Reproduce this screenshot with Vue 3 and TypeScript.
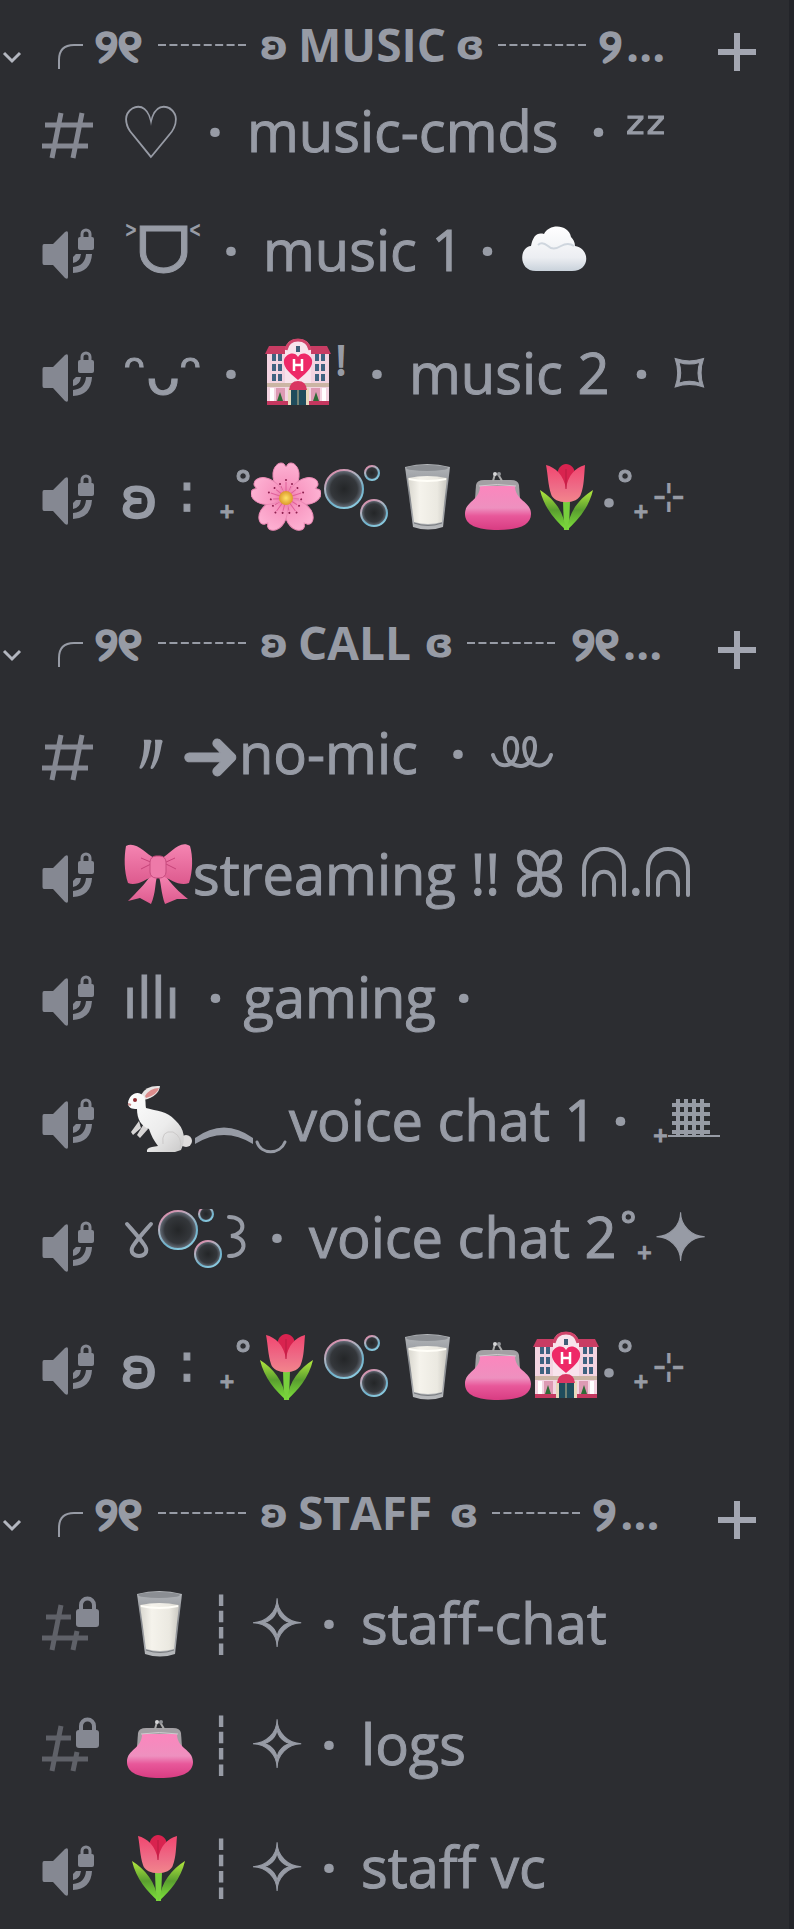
<script setup lang="ts">
import { ref } from 'vue'

type Gap = 0 | 4 | 8 | 12 | 16 | 20 | 24 | 28 | 32
interface Piece {
  text?: string
  art?: string
  width?: number
  gap?: Gap
  look?: string
}
interface Channel {
  icon: 'hash' | 'hash-locked' | 'voice-locked'
  pieces: Piece[]
  look?: string
}
interface Category {
  id: string
  title: Piece[]
  channels: Channel[]
}

const word = (text: string, gap: Gap = 0): Piece => ({ text, gap })
const glyph = (text: string, look: string, gap: Gap = 0): Piece => ({ text, look, gap })
const art = (name: string, width: number, gap: Gap = 0, look = ''): Piece => ({ art: name, width, gap, look })
const emoji = (name: string, gap: Gap = 0, look = ''): Piece => art(name, 70, gap, look)
const dot = (gap: Gap): Piece => glyph('·', 'c16 dot', gap)

const title = (name: string, nameGap: Gap, tail: string, tailLook: string, endGap: Gap): Piece[] => [
  art('corner', 32, 0),
  glyph('୨୧', 'c56 curl', 4),
  art('dashes', 88, 12),
  glyph('ʚ', 'c32 wing', 12),
  word(name, 8),
  glyph('ɞ', 'c32 wing', nameGap),
  art('dashes', 88, 12),
  glyph(tail, tailLook, 12),
  word('…', endGap),
]

const charms = (first: string, last: string): Piece[] => [
  glyph('ʚ', 'c32 thick'),
  glyph('∶', 'c16', 24),
  glyph('₊', 'c16 plus', 24),
  glyph('˚', 'c16'),
  emoji(first),
  emoji('bubbles'),
  emoji('milk'),
  emoji('purse'),
  emoji(last),
  glyph('.', 'c16 dot raised'),
  glyph('˚', 'c16'),
  glyph('₊', 'c16 plus'),
  glyph('⊹', 'c40 cross'),
]

const staff = (charm: string, name: string): Piece[] => [
  emoji(charm),
  glyph('┊', 'c16 plain', 20),
  glyph('✧', 'c48 large', 24),
  dot(20),
  word(name, 24),
]

const categories: Category[] = [
  {
    id: 'music',
    title: title('MUSIC', 8, '୨', 'c24 curl', 4),
    channels: [
      { icon: 'hash', pieces: [glyph('♡', 'c56 huge plain'), dot(28), word('music-cmds', 24), dot(32), glyph('ᶻᶻ', 'c32', 24)] },
      { icon: 'voice-locked', pieces: [glyph('˃', 'c16 brow'), glyph('ᗜ', 'c48 large'), glyph('˂', 'c16 brow'), dot(20), word('music 1', 24), dot(16), emoji('cloud', 24)] },
      { icon: 'voice-locked', pieces: [glyph('ᵔ', 'c24'), glyph('ᴗ', 'c32'), glyph('ᵔ', 'c24'), dot(20), emoji('hospital', 24), glyph('!', 'c16 super'), dot(20), word('music 2', 24), dot(24), glyph('⌑', 'c32', 24)] },
      { icon: 'voice-locked', pieces: charms('blossom', 'tulip') },
    ],
  },
  {
    id: 'call',
    title: title('CALL', 12, '୨୧', 'c56 curl', 0),
    channels: [
      { icon: 'hash', pieces: [glyph('〃', 'c56 thick'), glyph('➜', 'c56 huge', 4), word('no-mic'), dot(32), art('loops', 64, 24)] },
      { icon: 'voice-locked', pieces: [emoji('bow'), word('streaming !!'), glyph('ꕤ', 'c48 large', 16), art('arch', 48, 16), glyph('.', 'c16'), art('arch', 48)] },
      { icon: 'voice-locked', pieces: [word('ıllı'), dot(28), word('gaming', 20), dot(20)] },
      { icon: 'voice-locked', pieces: [emoji('rabbit'), art('waves', 96), word('voice chat 1'), dot(16), glyph('₊', 'c16 plus', 24), art('fence', 56)] },
      { icon: 'voice-locked', look: 'lifted', pieces: [art('ribbon', 32), emoji('bubbles', 0, 'cropped'), art('brace', 24), dot(20), word('voice chat 2', 24), glyph('˚', 'c16', 4), glyph('₊', 'c16 plus'), glyph('✦', 'c56 large')] },
      { icon: 'voice-locked', pieces: charms('tulip', 'hospital') },
    ],
  },
  {
    id: 'staff',
    title: title('STAFF', 16, '୨', 'c24 curl', 4),
    channels: [
      { icon: 'hash-locked', pieces: staff('milk', 'staff-chat') },
      { icon: 'hash-locked', pieces: staff('purse', 'logs') },
      { icon: 'voice-locked', pieces: staff('tulip', 'staff vc') },
    ],
  },
]

const closed = ref<string[]>([])
const toggle = (id: string) => {
  closed.value = closed.value.includes(id) ? closed.value.filter((c) => c !== id) : [...closed.value, id]
}
const petals = [0, 72, 144, 216, 288]
const windows = [22, 32, 42].flatMap((y) => [9, 15, 52, 58].map((x) => ({ x, y })))
</script>

<template>
  <svg class="defs" aria-hidden="true">
    <defs>
      <linearGradient id="g-cloud" x1="0" y1="0" x2="0" y2="1"><stop offset="0" stop-color="#ffffff" /><stop offset=".7" stop-color="#eceef2" /><stop offset="1" stop-color="#c9d2db" /></linearGradient>
      <linearGradient id="g-purse" x1="0" y1="0" x2="0" y2="1"><stop offset="0" stop-color="#fb86bd" /><stop offset=".5" stop-color="#ee90bf" /><stop offset=".68" stop-color="#e8589a" /><stop offset="1" stop-color="#d83c82" /></linearGradient>
      <linearGradient id="g-milk" x1="0" y1="0" x2="1" y2="0"><stop offset="0" stop-color="#d9d7cf" /><stop offset=".3" stop-color="#f5f3ec" /><stop offset=".75" stop-color="#ebe9e1" /><stop offset="1" stop-color="#cbc9c2" /></linearGradient>
      <linearGradient id="g-glass" x1="0" y1="0" x2="0" y2="1"><stop offset="0" stop-color="#b4b7bb" /><stop offset=".5" stop-color="#84878c" /><stop offset="1" stop-color="#b9bbbe" /></linearGradient>
      <linearGradient id="g-tulip" x1="0" y1="0" x2="0" y2="1"><stop offset="0" stop-color="#f2466f" /><stop offset=".6" stop-color="#ee6c87" /><stop offset="1" stop-color="#f2868c" /></linearGradient>
      <linearGradient id="g-leaf" x1="0" y1="0" x2="0" y2="1"><stop offset="0" stop-color="#b3e83f" /><stop offset=".5" stop-color="#5a9e2f" /><stop offset="1" stop-color="#7ee23c" /></linearGradient>
      <linearGradient id="g-bow" x1="0" y1="0" x2="0" y2="1"><stop offset="0" stop-color="#f585b2" /><stop offset="1" stop-color="#dd5a8e" /></linearGradient>
      <linearGradient id="g-fur" x1="0" y1="0" x2="1" y2="1"><stop offset="0" stop-color="#ffffff" /><stop offset=".6" stop-color="#ececec" /><stop offset="1" stop-color="#c9c8c8" /></linearGradient>
      <linearGradient id="g-rim" x1=".2" y1="0" x2=".7" y2="1"><stop offset="0" stop-color="#e08bab" /><stop offset=".35" stop-color="#aab3c0" /><stop offset=".7" stop-color="#6fb2cc" /><stop offset="1" stop-color="#8ccbe0" /></linearGradient>
      <radialGradient id="g-bubble"><stop offset="0" stop-color="#242628" /><stop offset=".7" stop-color="#34373b" /><stop offset="1" stop-color="#6b7480" /></radialGradient>
      <radialGradient id="g-petal" gradientUnits="userSpaceOnUse" cx="0" cy="0" r="34"><stop offset="0" stop-color="#e76d9d" /><stop offset=".35" stop-color="#f795bf" /><stop offset="1" stop-color="#fdb0d2" /></radialGradient>
      <radialGradient id="g-pollen"><stop offset="0" stop-color="#ffe36a" /><stop offset="1" stop-color="#dd9a2c" /></radialGradient>
    </defs>

    <symbol id="hash" viewBox="0 0 60 80">
      <path class="line5" d="M22 23L13 68M43 23L34 68M6 35H54M3 56H49" />
    </symbol>
    <symbol id="hash-locked" viewBox="0 0 60 80">
      <path class="line5 dim" d="M22 23L13 68M38 49L34 68M7 35H32M3 56H49" />
      <rect class="solid" x="37" y="27" width="23" height="18" rx="3" />
      <path class="line4" d="M42 28V23a6.500 6.500 0 0 1 13 0V28" />
    </symbol>
    <symbol id="voice-locked" viewBox="0 0 60 80">
      <path class="solid" d="M5 35H14L26 23Q29 21 29 24V68Q29 71 26 69L14 56H5Q3.500 56 3.500 54V37Q3.500 35 5 35Z" />
      <rect class="solid" x="39" y="28" width="16" height="13" rx="2" />
      <path class="line3" d="M43 29V25a4 4 0 0 1 8 0V29" />
      <path class="solid" d="M34 54V48Q36 46 37 45H42Q41 53 34 54ZM34 64V58Q46 57 47 45H53Q52 63 34 64Z" />
    </symbol>

    <symbol id="corner" viewBox="0 0 32 80"><path class="thin" d="M5 65V56Q5 41 20 41H29" /></symbol>
    <symbol id="dashes" viewBox="0 0 88 80"><path class="thin" d="M0 41H88" stroke-dasharray="8 3.430" /></symbol>
    <symbol id="loops" viewBox="0 0 64 80">
      <path class="stroke" d="M3 43C6 53 14 55 20 52C29 47 30 26 21 26C12 26 13 48 23 52C30 56 37 54 41 48C47 38 46 26 40 26C31 26 33 48 43 52C52 56 59 51 61 43" />
    </symbol>
    <symbol id="arch" viewBox="0 0 48 80">
      <path class="stroke" d="M4 62V37C4 9 44 9 44 37V62M14 62V50C14 35 34 35 34 50V62" />
    </symbol>
    <symbol id="waves" viewBox="0 0 96 80">
      <path class="fill" d="M2 59Q31 38 60 59V65Q31 47 2 65Z" />
      <path class="stroke slim" d="M64 63C68 76 87 76 92 63" />
    </symbol>
    <symbol id="fence" viewBox="0 0 56 80">
      <path class="stroke butt" d="M10 20V57M18 20V57M26 20V57M34 20V57M4 26H42M4 35H42M4 44H42M4 53H42" />
      <path class="thin" d="M0 57H52" />
    </symbol>
    <symbol id="ribbon" viewBox="0 0 32 80">
      <path class="stroke" d="M4 28C12 37 16 41 22 50C26 57 20 60 16 60C12 60 6 57 10 50C16 41 20 37 28 28" />
    </symbol>
    <symbol id="brace" viewBox="0 0 24 80">
      <path class="stroke" d="M4 21C21 21 22 38 6 40C24 41 22 60 4 60" />
    </symbol>

    <symbol id="cloud" viewBox="0 0 70 80">
      <path d="M17 62C-1 62 0 38 12 37C14 27 18 23 25 25C30 14 50 15 52 28C54 30 56 33 56 37C71 39 72 62 53 62Z" fill="url(#g-cloud)" />
      <path d="M19 36Q23 32 29 37Q34 42 42 37Q49 33 55 37" fill="none" stroke="#cfd6de" stroke-width="2" />
    </symbol>
    <symbol id="hospital" viewBox="0 0 70 80">
      <path d="M4 20H66V72H4Z" fill="#f3d4e1" />
      <path d="M2 22L6 14H64L68 22Z" fill="#c83c63" />
      <path d="M22 52V18Q24 7 35 7T48 18V52Z" fill="#f8e3ec" />
      <path d="M23 18Q25 8 35 8T47 18" fill="none" stroke="#d0446a" stroke-width="3" />
      <path d="M33 14H37V20H33Z" fill="#3f5d77" />
      <path v-for="w in windows" :key="w.x + '-' + w.y" :d="`M${w.x} ${w.y}h4v7h-4z`" fill="#3f6280" />
      <path d="M35 48C24 39 20 34 21 28C23 21 32 19 35 25C38 19 47 21 49 28C50 34 46 39 35 48Z" fill="#ee2867" />
      <path d="M31 27V39M39 27V39M31 33H39" stroke="#fff" stroke-width="2.500" />
      <path d="M4 51H66V55H4Z" fill="#cbb5a4" />
      <path d="M4 69H66V73H4Z" fill="#c4375f" />
      <path d="M7 56H11V69H7ZM59 56H63V69H59Z" fill="#fff" />
      <path d="M13 56H22V69H13ZM48 56H57V69H48Z" fill="#dd9ab3" />
      <path d="M14 69L17 60L20 69ZM50 69L53 60L56 69Z" fill="#2f6b37" />
      <path d="M25 56H46V73H25Z" fill="#e7d9bc" />
      <path d="M28 57H43V73H28Z" fill="#1f4c5c" />
      <path d="M35 57V73" stroke="#c9b98d" stroke-width="1" />
      <path d="M26 58Q27 49 35 49T44 58Z" fill="#d93562" />
    </symbol>
    <symbol id="blossom" viewBox="0 0 70 80">
      <g transform="translate(35 43)">
        <g v-for="p in petals" :key="p" :transform="`rotate(${p})`">
          <path d="M0 0C-6 -5 -14 -14 -13 -25C-12 -33 -6 -37 -2 -34L0 -31L2 -34C6 -37 12 -33 13 -25C14 -14 6 -5 0 0Z" fill="url(#g-petal)" stroke="#ec8ab5" stroke-width="1" />
          <path d="M0 -4V-16M-2 -4L-5 -12M2 -4L5 -12" stroke="#e0609a" stroke-width="1" />
          <circle cx="0" cy="-18" r="1" fill="#8d1f4e" /><circle cx="-6" cy="-14" r="1" fill="#8d1f4e" /><circle cx="6" cy="-14" r="1" fill="#8d1f4e" />
        </g>
        <circle r="7" fill="url(#g-pollen)" />
      </g>
    </symbol>
    <symbol id="bubbles" viewBox="0 0 70 80">
      <g fill="url(#g-bubble)" stroke="url(#g-rim)" stroke-width="2">
        <circle cx="23" cy="34" r="19" /><circle cx="51" cy="18" r="7" /><circle cx="53" cy="58" r="13" />
      </g>
    </symbol>
    <symbol id="milk" viewBox="0 0 70 80">
      <path d="M14 12Q36 6 59 12L52 72Q37 77 22 72Z" fill="url(#g-glass)" />
      <ellipse cx="36" cy="13" rx="21" ry="3" fill="#8b8e93" />
      <path d="M17 23Q36 19 56 23L51 67Q37 71 23 67Z" fill="url(#g-milk)" />
      <path d="M18 24Q36 28 55 24" fill="none" stroke="#fffef8" stroke-width="2" />
      <path d="M23 68Q37 73 51 68" fill="none" stroke="#777a7e" stroke-width="1" />
    </symbol>
    <symbol id="purse" viewBox="0 0 70 80">
      <path d="M14 44L15 30Q16 25 23 25H50Q57 25 58 30L59 44Z" fill="#a3a0a4" />
      <path d="M32 26L34 19M41 26L37 19" stroke="#aaa" stroke-width="2" />
      <circle cx="34" cy="19" r="2" fill="#d5d5d7" /><circle cx="38" cy="19" r="2" fill="#909296" />
      <path d="M19 31H54C54 46 70 46 70 59C70 70 58 75 37 75S4 70 4 59C4 46 19 46 19 31Z" fill="url(#g-purse)" />
      <path d="M18 31Q36 28 55 31" fill="none" stroke="#cfcbd0" stroke-width="1" />
    </symbol>
    <symbol id="tulip" viewBox="0 0 70 80">
      <path d="M32 46H39L38 75H33Z" fill="#78cf3d" />
      <path d="M9 35C22 43 33 56 35 75C25 66 13 53 9 35ZM62 35C49 43 38 56 36 75C46 66 58 53 62 35Z" fill="url(#g-leaf)" />
      <path d="M35 9C45 10 46 20 42 36H28C24 20 26 10 35 9Z" fill="#d9234f" />
      <path d="M15 10C24 12 33 20 35 34C37 20 44 13 54 10C53 22 53 31 50 39C47 50 23 50 20 39C17 30 17 20 15 10Z" fill="url(#g-tulip)" />
      <path d="M35 34L35 14" stroke="#b91c43" stroke-width="1" />
    </symbol>
    <symbol id="bow" viewBox="0 0 70 80">
      <path d="M28 42C23 50 13 60 5 68L17 65L28 71C33 60 32 49 34 44ZM42 42C47 50 57 60 65 66L54 66L42 71C38 60 38 49 36 44Z" fill="url(#g-bow)" />
      <path d="M3 13C13 8 23 21 31 25V43C23 46 13 54 5 50C1 38 1 24 3 13ZM67 13C57 6 47 21 39 25V43C47 46 57 54 66 50C70 38 70 23 67 13Z" fill="url(#g-bow)" />
      <path d="M18 36L30 30M53 36L41 30M18 25L30 30M52 25L41 30" stroke="#c64379" stroke-width="1" />
      <rect x="27" y="23" width="16" height="22" rx="6" fill="#ee7aa9" stroke="#c64c7f" stroke-width="1" />
    </symbol>
    <symbol id="rabbit" viewBox="0 0 70 80">
      <path d="M18 16Q23 6 37 7Q36 17 21 21Z" fill="#e7e4e4" />
      <path d="M22 17Q27 9 36 9Q34 16 23 19Z" fill="#dc8c8c" />
      <circle cx="63" cy="62" r="6" fill="#dedcdc" />
      <path d="M16 42L8 53L10 56L18 49ZM22 43L14 56L17 59L25 50Z" fill="#d7d5d5" />
      <path d="M5 24C6 17 12 12 18 15C24 18 22 24 23 29C34 32 44 32 52 41C62 50 63 61 58 71L52 73H24Q23 69 29 68L35 67C31 62 28 56 26 50C18 47 14 40 14 30C9 30 5 29 5 24Z" fill="url(#g-fur)" />
      <path d="M57 70Q60 58 50 53Q38 51 40 65" fill="none" stroke="#cbc9c9" stroke-width="1" />
      <circle cx="12" cy="21" r="2" fill="#8f2c31" />
      <path d="M5 25L8 26" stroke="#c98b8b" stroke-width="2" />
    </symbol>
  </svg>

  <nav class="channels">
    <section v-for="(category, index) in categories" :key="category.id" class="category" :class="{ snug: index === 0 }">
      <header class="heading">
        <h2>
          <button type="button" class="toggle" :aria-expanded="!closed.includes(category.id)" @click="toggle(category.id)">
            <svg class="chevron" viewBox="0 0 22 80" aria-hidden="true"><path class="line2" d="M4 49L12 57L20 49" /></svg>
            <template v-for="(piece, i) in category.title" :key="i">
              <svg v-if="piece.art" class="art" :class="`g${piece.gap}`" :width="piece.width" height="80" aria-hidden="true"><use :href="'#' + piece.art" /></svg>
              <span v-else class="piece" :class="[`g${piece.gap}`, piece.look]"><span class="ink">{{ piece.text }}</span></span>
            </template>
          </button>
        </h2>
        <button type="button" class="add" aria-label="Create channel">
          <svg width="40" height="80" viewBox="0 0 40 80" aria-hidden="true"><path class="line6" d="M1 48H39M20 29V67" /></svg>
        </button>
      </header>
      <ul v-if="!closed.includes(category.id)">
        <li v-for="(channel, c) in category.channels" :key="c">
          <a href="#" class="channel">
            <svg class="icon" width="60" height="80" aria-hidden="true"><use :href="'#' + channel.icon" /></svg>
            <span class="label" :class="channel.look">
              <template v-for="(piece, i) in channel.pieces" :key="i">
                <svg v-if="piece.art" class="art" :class="[`g${piece.gap}`, piece.look]" :width="piece.width" height="80" aria-hidden="true"><use :href="'#' + piece.art" /></svg>
                <span v-else class="piece" :class="[`g${piece.gap}`, piece.look]"><span class="ink">{{ piece.text }}</span></span>
              </template>
            </span>
          </a>
        </li>
      </ul>
    </section>
  </nav>
</template>

<style>
body {
  margin: 0;
  background: #2c2d31;
}
</style>

<style scoped>
.defs {
  position: absolute;
  width: 0;
  height: 0;
}
.channels {
  box-sizing: border-box;
  min-height: 100vh;
  display: flex;
  flex-direction: column;
  gap: 64px;
  overflow: hidden;
  border-right: 5px solid #232429;
  background: #2c2d31;
  color: #979ba5;
  font-family: "Open Sans", "DejaVu Sans", "Noto Sans", sans-serif;
}
.heading {
  height: 88px;
  display: flex;
  align-items: center;
  padding-right: 32px;
}
h2 {
  flex: 1;
  min-width: 0;
  margin: 0;
  overflow: hidden;
}
button {
  border: 0;
  padding: 0;
  background: none;
  color: inherit;
  font: inherit;
  cursor: pointer;
}
.toggle {
  display: flex;
  align-items: center;
  font-size: 46px;
  font-weight: 700;
}
.chevron {
  width: 22px;
  height: 80px;
  flex: none;
  margin-right: 32px;
}
.add {
  flex: none;
  display: flex;
}
ul {
  list-style: none;
  margin: 0;
  padding: 26px 0 0;
  display: grid;
  gap: 43px;
}
li:first-child {
  margin-bottom: -2px;
}
.category + .category {
  margin-top: -1px;
}
.snug ul {
  padding-top: 2px;
}
.snug li:first-child {
  margin-bottom: -4px;
}
.channel {
  display: flex;
  align-items: center;
  gap: 24px;
  padding-left: 39px;
  color: inherit;
  text-decoration: none;
  font-size: 56px;
  -webkit-text-stroke: 1px currentColor;
}
.icon,
.art {
  flex: none;
  display: block;
}
.label {
  display: flex;
  align-items: center;
}
.lifted {
  margin: -12px 0 0;
}
.cropped {
  clip-path: inset(13px 0 0 0);
}
.piece {
  flex: none;
  height: 80px;
  line-height: 80px;
  display: flex;
  justify-content: center;
  white-space: pre;
}
.ink {
  flex: none;
}
.c16 { width: 16px; }
.c24 { width: 24px; }
.c32 { width: 32px; }
.c40 { width: 40px; }
.c48 { width: 48px; }
.c56 { width: 56px; }
.g4 { margin-left: 4px; }
.g8 { margin-left: 8px; }
.g12 { margin-left: 12px; }
.g16 { margin-left: 16px; }
.g20 { margin-left: 20px; }
.g24 { margin-left: 24px; }
.g28 { margin-left: 28px; }
.g32 { margin-left: 32px; }
.dot { font-weight: 700; -webkit-text-stroke: 0; }
.plain { -webkit-text-stroke: 0; }
.thick { -webkit-text-stroke: 2px currentColor; }
.large { font-size: 64px; }
.huge { font-size: 72px; }
.brow,
.cross { font-size: 40px; -webkit-text-stroke: 0; }
.brow { line-height: 68px; }
.plus { font-size: 46px; }
.wing { font-size: 40px; }
.curl { font-size: 46px; -webkit-text-stroke: 2px currentColor; }
.super { font-size: 40px; line-height: 56px; -webkit-text-stroke: 2px currentColor; }
.raised { line-height: 60px; }
.line2,
.line3,
.line4,
.line5,
.line6 {
  fill: none;
  stroke: #858892;
}
.line2 { stroke: #b3b6bf; stroke-width: 3; }
.line3 { stroke-width: 3; }
.line4 { stroke-width: 4; }
.line5 { stroke-width: 5; }
.line6 { stroke: #a3a6b1; stroke-width: 6; }
.dim { stroke: #5f6168; }
.solid { fill: #858892; }
.fill { fill: currentColor; }
.stroke { fill: none; stroke: currentColor; stroke-width: 4; stroke-linecap: round; }
.butt { stroke-linecap: butt; }
.slim { stroke-width: 3; }
.thin { fill: none; stroke: currentColor; stroke-width: 2; }
</style>
